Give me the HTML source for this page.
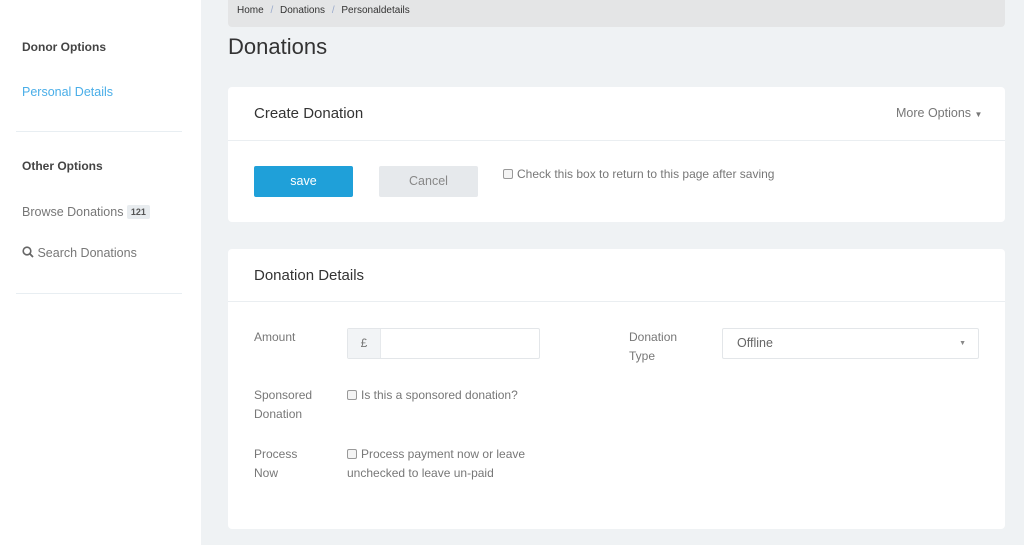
<!DOCTYPE html>
<html><head><style>
*{margin:0;padding:0;box-sizing:border-box}
body{width:1024px;height:545px;background:#eff2f4;font-family:"Liberation Sans",sans-serif;position:relative;overflow:hidden;color:#555}
.a{position:absolute;white-space:nowrap}
.side{position:absolute;left:0;top:0;width:201px;height:545px;background:#fff}
.card{position:absolute;left:228px;width:777px;background:#fff;border-radius:4px}
.hr{position:absolute;left:0;right:0;height:1px;background:#eaeef1}
.lbl{font-size:12px;color:#777;line-height:19px}
.cb{display:inline-block;width:10px;height:10px;border:1px solid #999;border-radius:2px;background:#f4f4f4;vertical-align:-1px;margin-right:4px}
</style></head><body>
<div class="side">
<div class="a" style="left:22px;top:40px;font-size:12px;font-weight:bold;color:#444">Donor Options</div>
<div class="a" style="left:22px;top:85px;font-size:12.5px;color:#4aaee8">Personal Details</div>
<div class="a" style="left:16px;top:131px;width:166px;height:1px;background:#e8eef2"></div>
<div class="a" style="left:22px;top:159px;font-size:12px;font-weight:bold;color:#444">Other Options</div>
<div class="a" style="left:22px;top:205px;font-size:12.5px;color:#777">Browse Donations <span style="display:inline-block;background:#e8ecef;color:#555;font-size:9px;font-weight:bold;padding:2px 4px;border-radius:2px;vertical-align:1px">121</span></div>
<div class="a" style="left:22px;top:246px;font-size:12.5px;color:#777"><svg width="12" height="12" viewBox="0 0 12 12" style="vertical-align:-1px"><circle cx="5" cy="5" r="3.8" fill="none" stroke="#666" stroke-width="1.6"/><path d="M7.8 7.8L11 11" stroke="#666" stroke-width="1.8"/></svg> Search Donations</div>
<div class="a" style="left:16px;top:293px;width:166px;height:1px;background:#e8eef2"></div>
</div>
<div class="a" style="left:228px;top:0;width:777px;height:27px;background:#e4e5e6;border-radius:0 0 4px 4px"></div>
<div class="a" style="left:237px;top:5px;font-size:10px;color:#333">Home <span style="color:#9ac;margin:0 4px">/</span> Donations <span style="color:#9ac;margin:0 4px">/</span> Personaldetails</div>
<div class="a" style="left:228px;top:34px;font-size:22px;color:#333">Donations</div>
<div class="card" style="top:87px;height:135px">
<div class="a" style="left:26px;top:18px;font-size:15px;color:#333">Create Donation</div>
<div class="a" style="left:668px;top:19px;font-size:12.5px;color:#777">More Options <span style="font-size:8px">▼</span></div>
<div class="hr" style="top:53px"></div>
<div class="a" style="left:26px;top:79px;width:99px;height:31px;background:#1fa0d9;border-radius:2px;color:#fff;font-size:12.5px;text-align:center;line-height:31px">save</div>
<div class="a" style="left:151px;top:79px;width:99px;height:31px;background:#e6e9ec;border-radius:2px;color:#888;font-size:12.5px;text-align:center;line-height:31px">Cancel</div>
<div class="a lbl" style="left:275px;top:78px"><span class="cb"></span>Check this box to return to this page after saving</div>
</div>
<div class="card" style="top:249px;height:280px">
<div class="a" style="left:26px;top:18px;font-size:15px;color:#333">Donation Details</div>
<div class="hr" style="top:52px"></div>
<div class="a lbl" style="left:26px;top:79px">Amount</div>
<div class="a" style="left:119px;top:79px;width:193px;height:31px;border:1px solid #e3e6e9;border-radius:2px;background:#fff"><div style="width:33px;height:29px;background:#f2f4f6;border-right:1px solid #e6e9ec;text-align:center;line-height:29px;font-size:12px;color:#777">£</div></div>
<div class="a lbl" style="left:401px;top:79px">Donation<br>Type</div>
<div class="a" style="left:494px;top:79px;width:257px;height:31px;border:1px solid #e3e6e9;border-radius:2px;font-size:12.5px;color:#666;line-height:29px;padding-left:14px">Offline<span style="position:absolute;right:12px;font-size:7px;color:#888">▼</span></div>
<div class="a lbl" style="left:26px;top:137px">Sponsored<br>Donation</div>
<div class="a lbl" style="left:119px;top:137px"><span class="cb"></span>Is this a sponsored donation?</div>
<div class="a lbl" style="left:26px;top:196px">Process<br>Now</div>
<div class="a lbl" style="left:119px;top:196px"><span class="cb"></span>Process payment now or leave<br>unchecked to leave un-paid</div>
</div>
</body></html>
